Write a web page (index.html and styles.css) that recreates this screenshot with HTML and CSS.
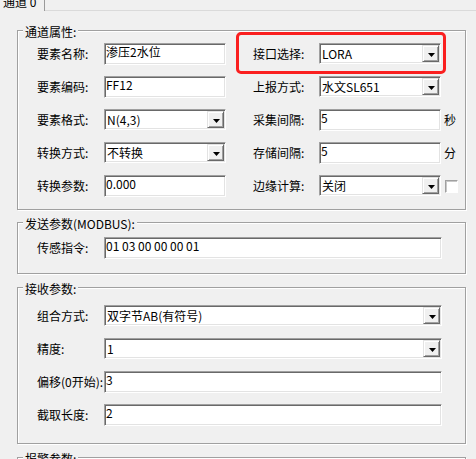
FILE: index.html
```html
<!DOCTYPE html>
<html lang="zh-CN">
<head>
<meta charset="utf-8">
<title>通道 0</title>
<link rel="stylesheet" href="styles.css">
</head>
<body>
<div class="tabs">
  <div class="tab"><span class="tab-text">通道 0</span></div>
  <div class="tab-rest"></div>
</div>
<div class="page">
  <fieldset class="group g1">
    <legend>通道属性:</legend>
    <div class="form form-ch">
      <span class="lbl">要素名称:</span>
      <div class="edit w122">渗压2水位</div>
      <span class="lbl">接口选择:</span>
      <div class="combo w122"><span class="val">LORA</span><span class="btn"><svg class="arrow" width="7" height="4" viewBox="0 0 7 4"><polygon points="0,0 7,0 3.5,4"/></svg></span></div>
      <span></span>

      <span class="lbl">要素编码:</span>
      <div class="edit w122">FF12</div>
      <span class="lbl">上报方式:</span>
      <div class="combo w122"><span class="val">水文SL651</span><span class="btn"><svg class="arrow" width="7" height="4" viewBox="0 0 7 4"><polygon points="0,0 7,0 3.5,4"/></svg></span></div>
      <span></span>

      <span class="lbl">要素格式:</span>
      <div class="combo w122"><span class="val">N(4,3)</span><span class="btn"><svg class="arrow" width="7" height="4" viewBox="0 0 7 4"><polygon points="0,0 7,0 3.5,4"/></svg></span></div>
      <span class="lbl">采集间隔:</span>
      <div class="edit w122">5</div>
      <span class="unit">秒</span>

      <span class="lbl">转换方式:</span>
      <div class="combo w122"><span class="val">不转换</span><span class="btn"><svg class="arrow" width="7" height="4" viewBox="0 0 7 4"><polygon points="0,0 7,0 3.5,4"/></svg></span></div>
      <span class="lbl">存储间隔:</span>
      <div class="edit w122">5</div>
      <span class="unit">分</span>

      <span class="lbl">转换参数:</span>
      <div class="edit w122">0.000</div>
      <span class="lbl">边缘计算:</span>
      <div class="combo w122"><span class="val">关闭</span><span class="btn"><svg class="arrow" width="7" height="4" viewBox="0 0 7 4"><polygon points="0,0 7,0 3.5,4"/></svg></span></div>
      <span class="chk"></span>
    </div>
  </fieldset>

  <fieldset class="group g2">
    <legend>发送参数(MODBUS):</legend>
    <div class="form form-wide">
      <span class="lbl">传感指令:</span>
      <div class="edit wfull">01 03 00 00 00 01</div>
    </div>
  </fieldset>

  <fieldset class="group g3">
    <legend>接收参数:</legend>
    <div class="form form-wide">
      <span class="lbl">组合方式:</span>
      <div class="combo wfull"><span class="val">双字节AB(有符号)</span><span class="btn"><svg class="arrow" width="7" height="4" viewBox="0 0 7 4"><polygon points="0,0 7,0 3.5,4"/></svg></span></div>

      <span class="lbl">精度:</span>
      <div class="combo wfull"><span class="val">1</span><span class="btn"><svg class="arrow" width="7" height="4" viewBox="0 0 7 4"><polygon points="0,0 7,0 3.5,4"/></svg></span></div>

      <span class="lbl">偏移(0开始):</span>
      <div class="edit wfull">3</div>

      <span class="lbl">截取长度:</span>
      <div class="edit wfull">2</div>
    </div>
  </fieldset>

  <fieldset class="group g4">
    <legend>报警参数:</legend>
  </fieldset>
</div>
<div class="callout"></div>
</body>
</html>
```

FILE: styles.css
```css
* { box-sizing: border-box; }

html, body { margin: 0; }

body {
  position: relative;
  width: 476px;
  height: 459px;
  overflow: hidden;
  background: #f0f0f0;
  font-family: "Noto Sans CJK SC", "Microsoft YaHei", sans-serif;
  font-size: 12px;
  line-height: 14px;
  color: #000;
}

/* tab strip */
.tabs {
  display: flex;
  height: 11px;
}
.tab {
  width: 45px;
  padding-left: 3px;
  border-right: 1px solid #9a9a9a;
  overflow: hidden;
}
.tab-text {
  display: block;
  margin-top: -5px;
  white-space: nowrap;
}
.tab-rest {
  flex: 1;
  border-bottom: 1px solid #dadada;
}

/* page */
.page {
  padding: 12px 0 0 17px;
}

.group {
  width: 449px;
  min-width: 0;
  margin: 0;
  padding: 0;
  border: 1px solid #a0a0a0;
  box-shadow: inset 1px 1px 0 #fff, 1px 1px 0 #fff;
}
.group legend {
  margin-left: 5px;
  padding: 2px 2px 0;
  line-height: 13px;
  background: #f0f0f0;
  white-space: nowrap;
}

.g1 { padding: 5px 0 12px; }
.g2 { margin-top: 5px; padding: 7px 0 14px; }
.g3 { margin-top: 6px; padding: 10px 0 17px; }
.g4 { margin-top: 6px; padding: 0; height: 30px; }

.form {
  display: grid;
  padding-left: 19px;
  grid-auto-rows: 22px;
  row-gap: 11px;
  align-items: center;
}
.form-ch { grid-template-columns: 67px 149px 66px 122px 1fr; }
.form-wide { grid-template-columns: 67px 338px; }

.lbl { white-space: nowrap; }
.unit { padding-left: 3px; }

.w122 { width: 122px; }
.wfull { width: 338px; }

/* sunken edit */
.edit {
  align-self: start;
  height: 22px;
  padding: 1px 1px 0;
  background: #fff;
  border: 1px solid;
  border-color: #a0a0a0 #fff #fff #a0a0a0;
  box-shadow: inset 1px 1px 0 #696969, inset -1px -1px 0 #e3e3e3;
  white-space: nowrap;
}

/* combo box */
.combo {
  align-self: start;
  display: flex;
  align-items: center;
  height: 21px;
  padding: 1px;
  background: #fff;
  border: 1px solid;
  border-color: #a0a0a0 #fff #fff #a0a0a0;
  box-shadow: inset 1px 1px 0 #696969, inset -1px -1px 0 #e3e3e3;
}
.combo .val {
  flex: 1;
  padding-left: 1px;
  white-space: nowrap;
}
.btn {
  align-self: stretch;
  display: flex;
  align-items: center;
  justify-content: center;
  width: 17px;
  background: #f0f0f0;
  border: 1px solid;
  border-color: #e3e3e3 #696969 #696969 #e3e3e3;
  box-shadow: inset 1px 1px 0 #fff, inset -1px -1px 0 #a0a0a0;
}
.arrow {
  display: block;
  margin: 2px 0 0 1px;
  fill: #000;
}

/* checkbox */
.chk {
  justify-self: start;
  width: 13px;
  height: 13px;
  margin-left: 4px;
  background: #fff;
  border: 1px solid;
  border-color: #a0a0a0 #fff #fff #a0a0a0;
  box-shadow: inset 1px 1px 0 #c8c8c8;
}

/* red annotation frame */
.callout {
  position: absolute;
  left: 236px;
  top: 32px;
  width: 210px;
  height: 42px;
  border: 3px solid #fa1f1f;
  border-radius: 5px;
  pointer-events: none;
}
```
